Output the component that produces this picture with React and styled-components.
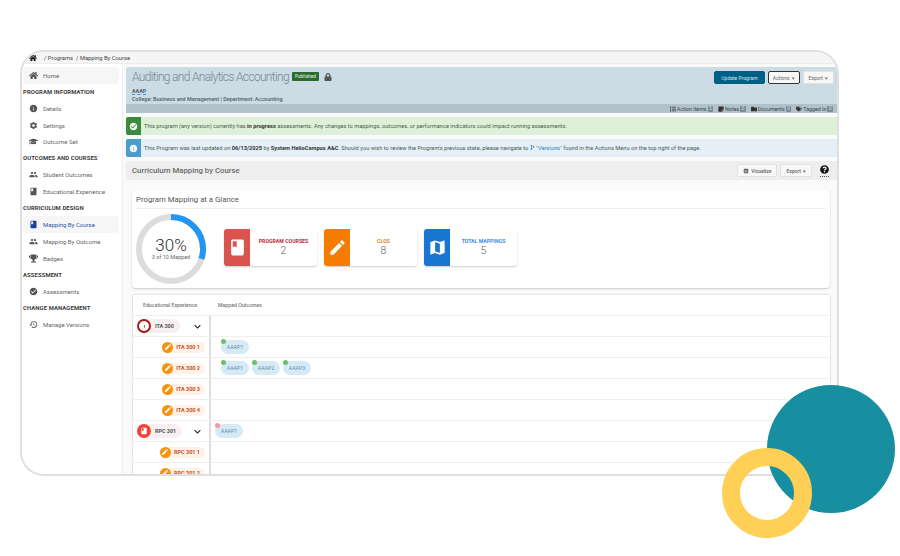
import React from 'react';
import styled, { createGlobalStyle } from 'styled-components';
import { FaHome, FaLock, FaTrophy, FaGraduationCap, FaList, FaFolder, FaTags, FaCodeBranch, FaQuestionCircle, FaStickyNote, FaExclamation } from 'react-icons/fa';
import { MdInfo, MdSettings, MdPeople, MdBook, MdCheckCircle, MdHistory, MdEdit, MdMap, MdInsertChart, MdKeyboardArrowDown } from 'react-icons/md';

const GlobalStyle = createGlobalStyle`
  html, body {
    margin: 0;
    background: #fff;
    font-family: Roboto, "Liberation Sans", sans-serif;
  }
`;

const Page = styled.div`
  position: relative;
  width: 900px;
  height: 556px;
  overflow: hidden;
  padding: 50px 0 0 20px;
  box-sizing: border-box;
  background: #fff;
`;

const Frame = styled.div`
  width: 819px;
  height: 426px;
  box-sizing: border-box;
  border: 2px solid #dfdfdf;
  border-radius: 24px;
  overflow: hidden;
  background: #fff;
  display: flex;
  flex-direction: column;
`;

const Crumbs = styled.div`
  height: 12px;
  flex: none;
  box-sizing: border-box;
  background: #f5f5f5;
  border-bottom: 1px solid #ececec;
  display: flex;
  align-items: center;
  gap: 3px;
  padding-left: 7px;
  font-size: 5.8px;
  color: #444;
  svg { font-size: 8px; color: #222; margin-right: 4px; }
`;

const Body = styled.div`
  flex: 1;
  min-height: 0;
  display: flex;
`;

const Sidebar = styled.nav`
  width: 101px;
  flex: none;
  box-sizing: border-box;
  padding: 3px 3px 0 1px;
  border-right: 1px solid #eee;
  background: #fff;
`;

const NavHead = styled.div`
  height: 16.2px;
  line-height: 16.2px;
  font-size: 5.9px;
  font-weight: 700;
  letter-spacing: 0.1px;
  color: #3c3c3c;
  white-space: nowrap;
`;

const NavItem = styled.div`
  height: 16.8px;
  display: flex;
  align-items: center;
  gap: 5px;
  padding-left: 6px;
  font-size: 6px;
  border-radius: 4px;
  color: ${p => (p.$active ? '#2f55a4' : '#666')};
  background: ${p => (p.$active || p.$tint ? '#f6f6f6' : 'transparent')};
  svg { width: 9px; height: 9px; flex: none; color: ${p => (p.$active ? '#1c3f9c' : '#555')}; }
`;

const Main = styled.main`
  flex: 1;
  min-width: 0;
  background: #fafafa;
  padding: 3px 0 0 3px;
  display: flex;
  flex-direction: column;
`;

const ProgramHead = styled.header`
  height: 46px;
  flex: none;
  background: #cbdce5;
  display: flex;
  flex-direction: column;
  border-radius: 2px 0 0 2px;
`;

const HeadTop = styled.div`
  flex: 1;
  min-height: 0;
  display: flex;
  justify-content: space-between;
  padding: 3px 3px 0 6px;
`;

const TitleRow = styled.div`
  display: flex;
  align-items: center;
  gap: 2px;
  height: 13px;
`;

const Title = styled.h1`
  margin: 0;
  font-size: 12px;
  letter-spacing: -0.67px;
  font-weight: 300;
  color: #78868e;
  white-space: nowrap;
`;

const Badge = styled.span`
  background: #2c6b30;
  color: #e8f3e8;
  font-size: 4.8px;
  line-height: 6px;
  padding: 1.5px 3px;
  border-radius: 1px;
  margin-right: 3px;
  margin-left: 1px;
`;

const ProgramCode = styled.span`
  display: block;
  width: fit-content;
  margin-top: 5px;
  font-size: 5.4px;
  line-height: 6px;
  font-weight: 700;
  color: #4d5d68;
  border-bottom: 1px dashed #3f9bd8;
`;

const College = styled.div`
  margin-top: 1px;
  font-size: 5.45px;
  line-height: 6px;
  font-weight: 500;
  color: #4d5d68;
  white-space: nowrap;
`;

const ButtonRow = styled.div`
  display: flex;
  gap: 3px;
  align-items: flex-start;
  padding-top: 1px;
`;

const Button = styled.span`
  height: 13px;
  box-sizing: border-box;
  padding: 0 ${p => p.$pad || 5}px;
  display: inline-flex;
  align-items: center;
  gap: 2px;
  font-size: 5px;
  white-space: nowrap;
  border-radius: 2px;
  color: ${p => (p.$primary ? '#d6e6ee' : '#666')};
  background: ${p => (p.$primary ? '#005f85' : '#f7f7f7')};
  border: 1px solid ${p => (p.$primary ? '#005f85' : p.$focus ? '#333' : '#e2e2e2')};
  &::after {
    content: ${p => (p.$caret ? '"▾"' : 'none')};
    font-size: 5px;
  }
`;

const TagStrip = styled.div`
  height: 9px;
  flex: none;
  background: #b1c2cb;
  display: flex;
  justify-content: flex-end;
  align-items: center;
  gap: 5px;
  padding-right: 4px;
  font-size: 5.3px;
  color: #3d464c;
`;

const Tag = styled.span`
  display: inline-flex;
  align-items: center;
  gap: 1px;
  svg { width: 6px; height: 6px; color: #333; }
`;

const Count = styled.span`
  background: #7d8b93;
  color: #d5dde1;
  font-size: 4.5px;
  line-height: 6px;
  padding: 0 1.5px;
  border-radius: 1px;
`;

const Alert = styled.div`
  height: 18px;
  flex: none;
  margin-top: 4px;
  display: flex;
  align-items: center;
  font-size: 5.7px;
  color: #4d5a52;
  background: ${p => p.$bg};
  white-space: nowrap;
  b { font-weight: 700; color: #333; }
  a { color: #2a86bd; }
`;

const AlertIcon = styled.span`
  width: 15px;
  height: 100%;
  flex: none;
  margin-right: 3px;
  display: flex;
  align-items: center;
  justify-content: center;
  border-radius: 2px 0 0 2px;
  background: ${p => p.$bg};
  svg { width: 9px; height: 9px; color: #f2f8f2; }
`;

const SectionBar = styled.div`
  height: 19px;
  flex: none;
  margin-top: 4px;
  background: #eee;
  display: flex;
  align-items: center;
  justify-content: space-between;
  padding: 0 8px 0 6px;
  font-size: 7.8px;
  font-weight: 500;
  color: #6a6a6a;
  border-radius: 2px 0 0 2px;
`;

const BarTools = styled.div`
  display: flex;
  align-items: center;
  gap: 3px;
`;

const HelpIcon = styled.span`
  display: inline-flex;
  margin-left: 5px;
  padding-bottom: 2px;
  border-bottom: 1px dotted #555;
  svg { width: 9px; height: 9px; color: #111; }
`;

const Content = styled.div`
  padding: 10px 7px 0 6px;
  display: flex;
  flex-direction: column;
  gap: 7px;
`;

const Card = styled.section`
  height: 98px;
  flex: none;
  box-sizing: border-box;
  padding: 5px 4px 0;
  background: #fff;
  border-radius: 4px;
  box-shadow: 0 1px 2px rgba(0, 0, 0, 0.2);
`;

const CardTitle = styled.div`
  height: 14px;
  box-sizing: border-box;
  line-height: 9px;
  font-size: 7.8px;
  color: #555;
  border-bottom: 1px solid #eee;
`;

const GlanceRow = styled.div`
  display: flex;
  align-items: center;
  margin-top: 5px;
`;

const Donut = styled.div`
  position: relative;
  width: 70px;
  height: 70px;
  flex: none;
  margin-right: 18px;
`;

const DonutLabel = styled.div`
  position: absolute;
  inset: 0;
  display: flex;
  flex-direction: column;
  align-items: center;
  justify-content: center;
  font-size: 17px;
  line-height: 18px;
  font-weight: 300;
  color: #333;
  padding-bottom: 1px;
  small { font-size: 5.5px; line-height: 7px; color: #666; font-weight: 400; }
`;

const Stats = styled.div`
  display: flex;
  gap: 7px;
  margin-bottom: 3px;
`;

const Stat = styled.div`
  width: 93px;
  height: 37px;
  display: flex;
  background: #fff;
  border-radius: 3px;
  box-shadow: 0 1px 2px rgba(0, 0, 0, 0.2);
  overflow: hidden;
`;

const StatIcon = styled.div`
  width: 26px;
  flex: none;
  display: flex;
  align-items: center;
  justify-content: center;
  background: ${p => p.$bg};
  svg { width: 19px; height: 19px; color: #fff; }
`;

const StatText = styled.div`
  flex: 1;
  display: flex;
  flex-direction: column;
  align-items: center;
  justify-content: center;
  font-size: 10.5px;
  line-height: 12px;
  color: #666;
  font-weight: 300;
  span {
    font-size: 5.2px;
    line-height: 7px;
    font-weight: 700;
    color: ${p => p.$color};
  }
`;

const Table = styled.section`
  margin-left: 1px;
  background: #fff;
  box-shadow: 0 0 2px rgba(0, 0, 0, 0.25);
`;

const Row = styled.div`
  height: 21px;
  box-sizing: border-box;
  display: flex;
  border-bottom: 1px solid #efefef;
  font-size: 5.2px;
`;

const HeadCell = styled.div`
  width: ${p => p.$w}px;
  flex: none;
  display: flex;
  align-items: center;
  padding-left: ${p => p.$pad}px;
  box-sizing: border-box;
  color: #777;
  font-weight: 500;
`;

const LeftCell = styled.div`
  width: 78px;
  flex: none;
  box-sizing: border-box;
  display: flex;
  align-items: center;
  justify-content: ${p => (p.$parent ? 'flex-start' : 'flex-end')};
  padding: ${p => (p.$parent ? '0 0 0 4px' : '0 4px 0 0')};
  border-right: 2px solid #ddd;
`;

const CoursePill = styled.span`
  height: 14px;
  display: inline-flex;
  align-items: center;
  gap: 4px;
  padding-right: 6px;
  border-radius: 7px;
  background: #f8f0f0;
  font-weight: 700;
  font-size: 5.4px;
  color: #555;
`;

const CourseDot = styled.span`
  width: 14px;
  height: 14px;
  box-sizing: border-box;
  border-radius: 50%;
  display: flex;
  align-items: center;
  justify-content: center;
  border: 2.5px solid ${p => p.$color};
  background: ${p => (p.$solid ? p.$color : '#fff')};
  svg {
    width: ${p => (p.$solid ? 8 : 3)}px;
    height: ${p => (p.$solid ? 8 : 3)}px;
    color: ${p => (p.$solid ? '#fff' : p.$color)};
  }
`;

const Chevron = styled(MdKeyboardArrowDown)`
  width: 13px;
  height: 13px;
  margin-left: auto;
  margin-right: 5px;
  color: #222;
`;

const LoPill = styled.span`
  height: 11px;
  display: inline-flex;
  align-items: center;
  gap: 3px;
  padding-right: 5px;
  border-radius: 6px;
  background: #fef1e6;
  font-weight: 700;
  font-size: 5.5px;
  color: #c4552d;
`;

const LoDot = styled.span`
  width: 11px;
  height: 11px;
  border-radius: 50%;
  background: #f7930e;
  display: flex;
  align-items: center;
  justify-content: center;
  svg { width: 8px; height: 8px; color: #fff; }
`;

const Outcomes = styled.div`
  flex: 1;
  display: flex;
  align-items: center;
  gap: 3px;
  padding-left: ${p => p.$inset}px;
`;

const Chip = styled.span`
  position: relative;
  width: 28px;
  height: 14px;
  border-radius: 7px;
  background: #d6eaf5;
  color: #5f8ba8;
  font-size: 5.2px;
  display: flex;
  align-items: center;
  justify-content: center;
  &::before {
    content: '';
    position: absolute;
    top: -1px;
    left: 0;
    width: 5px;
    height: 5px;
    border-radius: 50%;
    background: ${p => p.$dot};
  }
`;

const BigCircle = styled.div`
  position: absolute;
  left: 767px;
  top: 385px;
  width: 128px;
  height: 128px;
  border-radius: 50%;
  background: #188ea1;
`;

const Ring = styled.div`
  position: absolute;
  left: 722px;
  top: 448px;
  width: 90px;
  height: 90px;
  box-sizing: border-box;
  border-radius: 50%;
  border: 18px solid #ffd055;
`;

const navigation = [
  { item: 'Home', icon: FaHome, tint: true },
  { head: 'PROGRAM INFORMATION' },
  { item: 'Details', icon: MdInfo },
  { item: 'Settings', icon: MdSettings },
  { item: 'Outcome Set', icon: FaGraduationCap },
  { head: 'OUTCOMES AND COURSES' },
  { item: 'Student Outcomes', icon: MdPeople },
  { item: 'Educational Experience', icon: MdBook },
  { head: 'CURRICULUM DESIGN' },
  { item: 'Mapping By Course', icon: MdBook, active: true },
  { item: 'Mapping By Outcome', icon: MdPeople },
  { item: 'Badges', icon: FaTrophy },
  { head: 'ASSESSMENT' },
  { item: 'Assessments', icon: MdCheckCircle },
  { head: 'CHANGE MANAGEMENT' },
  { item: 'Manage Versions', icon: MdHistory },
];

const rows = [
  { course: 'ITA 300', color: '#a61c1c', icon: FaExclamation, inset: 0, chips: [] },
  { lo: 'ITA 300 1', inset: 10, chips: [['AAAP1', '#6cbf6c']] },
  { lo: 'ITA 300 2', inset: 10, chips: [['AAAP1', '#6cbf6c'], ['AAAP2', '#6cbf6c'], ['AAAP3', '#6cbf6c']] },
  { lo: 'ITA 300 3', inset: 10, chips: [] },
  { lo: 'ITA 300 4', inset: 10, chips: [] },
  { course: 'RPC 301', color: '#f04438', solid: true, icon: MdBook, inset: 4, chips: [['AAAP1', '#f09aa0']] },
  { lo: 'RPC 301 1', inset: 10, chips: [] },
  { lo: 'RPC 301 2', inset: 10, chips: [] },
];

const stats = [
  { label: 'PROGRAM COURSES', value: 2, bg: '#d9534f', color: '#c0283a', icon: MdBook },
  { label: 'CLOS', value: 8, bg: '#f57c00', color: '#e0862a', icon: MdEdit },
  { label: 'TOTAL MAPPINGS', value: 5, bg: '#1976d2', color: '#3d8de0', icon: MdMap },
];

function App() {
  return (
    <Page>
      <GlobalStyle />
      <Frame>
        <Crumbs>
          <FaHome />
          <span>/ Programs</span>
          <span>/ Mapping By Course</span>
        </Crumbs>
        <Body>
          <Sidebar>
            {navigation.map(n =>
              n.head ? (
                <NavHead key={n.head}>{n.head}</NavHead>
              ) : (
                <NavItem key={n.item} $active={n.active} $tint={n.tint}>
                  <n.icon />
                  {n.item}
                </NavItem>
              )
            )}
          </Sidebar>
          <Main>
            <ProgramHead>
              <HeadTop>
                <div>
                  <TitleRow>
                    <Title>Auditing and Analytics Accounting</Title>
                    <Badge>Published</Badge>
                    <FaLock size={8} color="#555" />
                  </TitleRow>
                  <ProgramCode>AAAP</ProgramCode>
                  <College>College: Business and Management | Department: Accounting</College>
                </div>
                <ButtonRow>
                  <Button $primary $pad={6}>Update Program</Button>
                  <Button $focus $caret $pad={4}>Actions</Button>
                  <Button $caret>Export</Button>
                </ButtonRow>
              </HeadTop>
              <TagStrip>
                <Tag><FaList />Action Items<Count>5</Count></Tag>
                <Tag><FaStickyNote />Notes<Count>0</Count></Tag>
                <Tag><FaFolder />Documents<Count>0</Count></Tag>
                <Tag><FaTags />Tagged In<Count>0</Count></Tag>
              </TagStrip>
            </ProgramHead>
            <Alert $bg="#dff0d8">
              <AlertIcon $bg="#3c8b3c"><MdCheckCircle /></AlertIcon>
              <span>
                This program (any version) currently has <b>in progress</b> assessments. Any changes to mappings, outcomes, or performance indicators could impact running assessments.
              </span>
            </Alert>
            <Alert $bg="#e4eff7">
              <AlertIcon $bg="#4a9ccb"><MdInfo /></AlertIcon>
              <span>
                This Program was last updated on <b>06/13/2025</b> by <b>System HelioCampus A&amp;C</b>. Should you wish to review the Program's previous state, please navigate to <FaCodeBranch size={5} color="#2a86bd" /> <a>"Versions"</a> found in the Actions Menu on the top right of the page.
              </span>
            </Alert>
            <SectionBar>
              Curriculum Mapping by Course
              <BarTools>
                <Button><MdInsertChart size={6} />Visualize</Button>
                <Button $caret>Export</Button>
                <HelpIcon><FaQuestionCircle /></HelpIcon>
              </BarTools>
            </SectionBar>
            <Content>
              <Card>
                <CardTitle>Program Mapping at a Glance</CardTitle>
                <GlanceRow>
                  <Donut>
                    <svg width="70" height="70" viewBox="0 0 70 70">
                      <circle cx="35" cy="35" r="32" fill="none" stroke="#dcdcdc" strokeWidth="6" />
                      <circle cx="35" cy="35" r="32" fill="none" stroke="#2196f3" strokeWidth="6" strokeDasharray="60.3 201.1" transform="rotate(-90 35 35)" />
                    </svg>
                    <DonutLabel>
                      30%
                      <small>3 of 10 Mapped</small>
                    </DonutLabel>
                  </Donut>
                  <Stats>
                    {stats.map(s => (
                      <Stat key={s.label}>
                        <StatIcon $bg={s.bg}><s.icon /></StatIcon>
                        <StatText $color={s.color}>
                          <span>{s.label}</span>
                          {s.value}
                        </StatText>
                      </Stat>
                    ))}
                  </Stats>
                </GlanceRow>
              </Card>
              <Table>
                <Row>
                  <HeadCell $w={78} $pad={10}>Educational Experience</HeadCell>
                  <HeadCell $w={200} $pad={7}>Mapped Outcomes</HeadCell>
                </Row>
                {rows.map(r => (
                  <Row key={r.course || r.lo}>
                    <LeftCell $parent={!!r.course}>
                      {r.course ? (
                        <>
                          <CoursePill>
                            <CourseDot $color={r.color} $solid={r.solid}><r.icon /></CourseDot>
                            {r.course}
                          </CoursePill>
                          <Chevron />
                        </>
                      ) : (
                        <LoPill>
                          <LoDot><MdEdit /></LoDot>
                          {r.lo}
                        </LoPill>
                      )}
                    </LeftCell>
                    <Outcomes $inset={r.inset}>
                      {r.chips.map(([label, dot]) => (
                        <Chip key={label} $dot={dot}>{label}</Chip>
                      ))}
                    </Outcomes>
                  </Row>
                ))}
              </Table>
            </Content>
          </Main>
        </Body>
      </Frame>
      <BigCircle />
      <Ring />
    </Page>
  );
}

export default App;
